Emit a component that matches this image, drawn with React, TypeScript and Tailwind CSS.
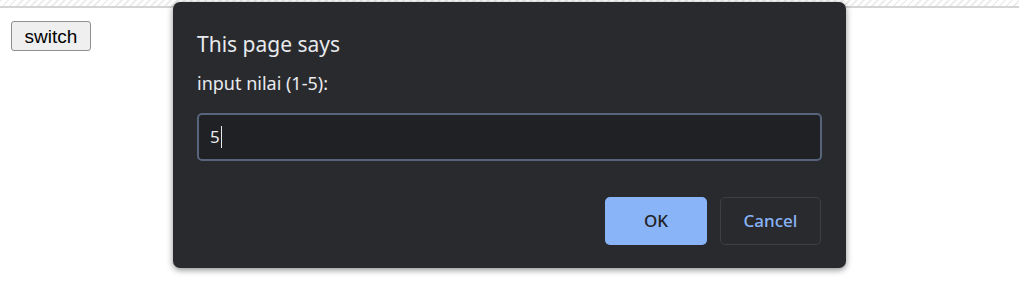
import React from 'react';

const font = { fontFamily: '"Noto Sans", "Open Sans", sans-serif' };

export default function App() {
  return (
    <div className="relative w-[1019px] h-[288px] bg-white overflow-hidden" style={font}>
      {/* browser toolbar edge */}
      <div className="h-[8px] bg-[repeating-linear-gradient(135deg,#eeeeee_0px,#eeeeee_2px,#ffffff_2px,#ffffff_5px)] border-b-2 border-[#d4d4d4]" />

      <div className="pl-[11px] pt-[13px]">
        <button className="h-[30px] w-[80px] rounded-[3px] border border-[#8f8f8f] bg-[#efefef] text-[19px] leading-none text-black font-['Liberation_Sans',sans-serif]">
          switch
        </button>
      </div>

      {/* prompt dialog */}
      <div className="absolute left-[173px] top-[2px] w-[673px] h-[266px] rounded-[7px] bg-[#292a2d] shadow-[0_2px_6px_rgba(0,0,0,0.45)] px-[24px] pt-[28px] flex flex-col">
        <div className="text-[21px] leading-[28px] text-[#e8eaed]">This page says</div>
        <div className="mt-[14px] text-[18px] leading-[22px] text-[#e8eaed]">input nilai (1-5):</div>
        <div className="mt-[19px] h-[48px] w-[625px] rounded-[5px] border-2 border-[#56647c] bg-[#202124] flex items-center px-[11px]">
          <span className="text-[17px] text-[#e8eaed]">5</span>
          <span className="ml-[1px] w-[1px] h-[22px] bg-[#e8eaed]" />
        </div>
        <div className="mt-[36px] flex justify-end gap-[13px] pr-[1px]">
          <button className="w-[102px] h-[48px] rounded-[5px] bg-[#8ab4f8] text-[17px] font-medium text-[#202124]">OK</button>
          <button className="w-[101px] h-[48px] rounded-[5px] border border-[#3c4043] bg-[#292a2d] text-[17px] font-medium text-[#8ab4f8]">Cancel</button>
        </div>
      </div>
    </div>
  );
}
